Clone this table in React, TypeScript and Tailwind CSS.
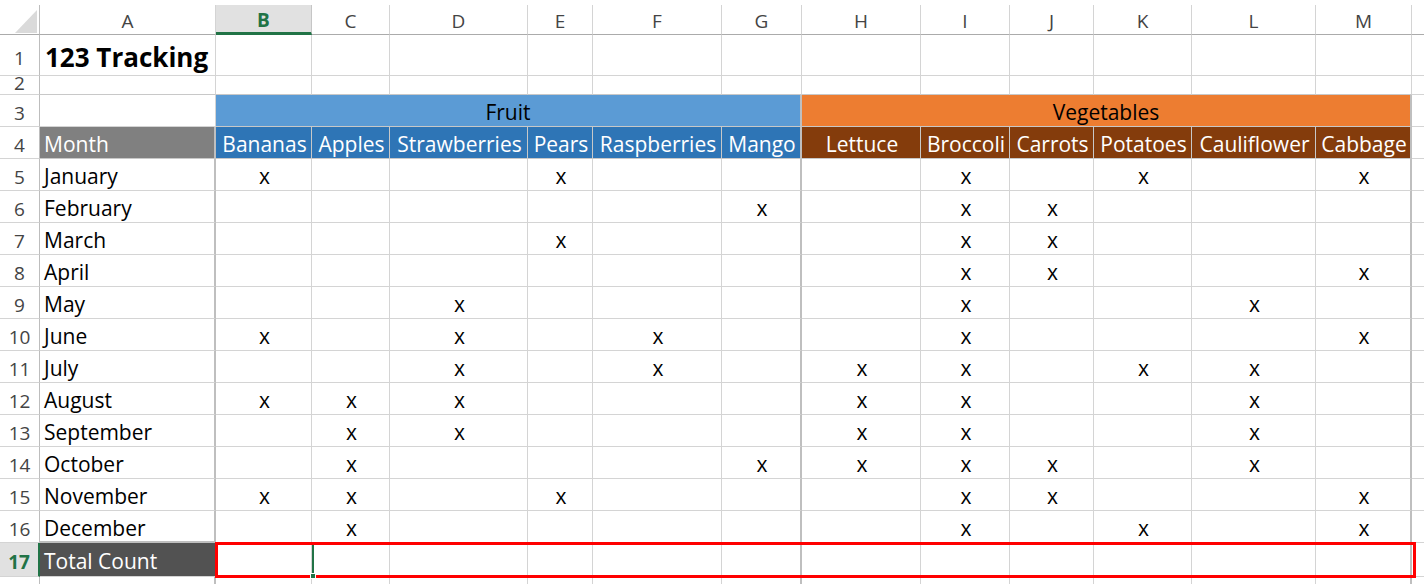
import React from 'react';

const COLS = ['A', 'B', 'C', 'D', 'E', 'F', 'G', 'H', 'I', 'J', 'K', 'L', 'M'];
const FRUIT = ['Bananas', 'Apples', 'Strawberries', 'Pears', 'Raspberries', 'Mango'];
const VEG = ['Lettuce', 'Broccoli', 'Carrots', 'Potatoes', 'Cauliflower', 'Cabbage'];

// month name, then the columns that carry an x
const MONTHS: Array<[string, string]> = [
  ['January', 'BEIKM'],
  ['February', 'GIJ'],
  ['March', 'EIJ'],
  ['April', 'IJM'],
  ['May', 'DIL'],
  ['June', 'BDFIM'],
  ['July', 'DFHIKL'],
  ['August', 'BCDHIL'],
  ['September', 'CDHIL'],
  ['October', 'CGHIJL'],
  ['November', 'BCEIJM'],
  ['December', 'CIKM'],
];

const thinR = 'border-r border-r-[#d4d4d4]';
const thickR = 'border-r-2 border-r-[#bfbfbf]';
const rightFor = (c: string) => (c === 'A' || c === 'G' || c === 'M' ? thickR : thinR);

const RowNum: React.FC<{ n?: number; clip?: boolean }> = ({ n, clip }) => (
  <div
    className={`flex justify-center overflow-hidden border-r border-b border-r-[#bdbdbd] border-b-[#d4d4d4] bg-white text-[19px] text-[#444] ${
      clip ? 'items-end pb-[1px] leading-[19px]' : 'items-center pt-[6px]'
    }`}
  >
    {n}
  </div>
);

const App: React.FC = () => {
  return (
    <div className="relative h-[584px] w-[1424px] overflow-hidden bg-white font-['Open_Sans',sans-serif] text-[21px] text-black">
      <div className="grid grid-cols-[40px_176px_96px_78px_138px_65px_129px_80px_119px_89px_84px_98px_124px_96px_1fr] grid-rows-[35px_41px_19px_32px_32px_repeat(12,32px)_34px_32px]">
        {/* column letters */}
        <div className="flex pt-[5px]">
          <div className="flex flex-1 items-end justify-end border-r border-b border-r-[#bdbdbd] border-b-[#ababab] pr-[2px] pb-[1px]">
            <svg width="22" height="23" viewBox="0 0 22 23">
              <polygon points="22,0 22,23 0,23" fill="#dadada" />
            </svg>
          </div>
        </div>
        {COLS.map((c) => (
          <div key={c} className="flex pt-[5px]">
            {c === 'B' ? (
              <div className="flex flex-1 items-center justify-center border-r border-b-[3px] border-r-[#c6c6c6] border-b-[#217346] bg-[#e1e1e1] pt-[3px] text-[19px] font-bold text-[#217346]">
                {c}
              </div>
            ) : (
              <div className="flex flex-1 items-center justify-center border-r border-b border-r-[#d4d4d4] border-b-[#ababab] pt-[4px] text-[19px] text-[#444]">
                {c}
              </div>
            )}
          </div>
        ))}
        <div className="flex pt-[5px]">
          <div className="flex-1 border-b border-b-[#ababab]" />
        </div>

        {/* row 1 */}
        <RowNum n={1} />
        <div className={`flex items-center whitespace-nowrap border-b border-b-[#d4d4d4] pl-[5px] pt-[4px] text-[26px] font-bold ${thinR}`}>
          123 Tracking
        </div>
        {COLS.slice(1).map((c) => (
          <div key={c} className={`border-b border-b-[#d4d4d4] ${thinR}`} />
        ))}
        <div className="border-b border-b-[#d4d4d4]" />

        {/* row 2 */}
        <RowNum n={2} clip />
        {COLS.map((c) => (
          <div key={c} className={`border-b border-b-[#c8c8c8] ${thinR}`} />
        ))}
        <div className="border-b border-b-[#d4d4d4]" />

        {/* row 3 */}
        <RowNum n={3} />
        <div className={`border-b border-b-[#d4d4d4] ${thinR}`} />
        <div className="col-span-6 flex items-center justify-center border-r-2 border-b border-r-[#bfbfbf] border-b-[#c8c8c8] bg-[#5b9bd5] pt-[5px]">
          Fruit
        </div>
        <div className="col-span-6 flex items-center justify-center border-r-2 border-b border-r-[#bfbfbf] border-b-[#c8c8c8] bg-[#ed7d31] pt-[5px]">
          Vegetables
        </div>
        <div className="border-b border-b-[#d4d4d4]" />

        {/* row 4 */}
        <RowNum n={4} />
        <div className={`flex items-center border-b border-b-[#c8c8c8] bg-[#808080] pl-[4px] pt-[5px] text-white ${thickR}`}>
          Month
        </div>
        {FRUIT.map((f, i) => (
          <div
            key={f}
            className={`flex items-center justify-center whitespace-nowrap border-b border-b-[#c8c8c8] bg-[#2e75b6] pt-[5px] pl-[2px] text-white ${
              i === 5 ? thickR : 'border-r border-r-[#c8c8c8]'
            }`}
          >
            {f}
          </div>
        ))}
        {VEG.map((v, i) => (
          <div
            key={v}
            className={`flex items-center justify-center whitespace-nowrap border-b border-b-[#c8c8c8] bg-[#843c0c] pt-[5px] pl-[2px] text-white ${
              i === 5 ? thickR : 'border-r border-r-[#c8c8c8]'
            }`}
          >
            {v}
          </div>
        ))}
        <div className="border-b border-b-[#d4d4d4]" />

        {/* rows 5-16 */}
        {MONTHS.map(([m, marks], r) => (
          <React.Fragment key={m}>
            <RowNum n={r + 5} />
            <div
              className={`flex items-center pl-[4px] pt-[5px] ${thickR} ${
                r === 11 ? 'border-b-2 border-b-[#bfbfbf]' : 'border-b border-b-[#d4d4d4]'
              }`}
            >
              {m}
            </div>
            {COLS.slice(1).map((c) => (
              <div key={c} className={`flex items-center justify-center border-b border-b-[#d4d4d4] pt-[5px] pl-[2px] ${rightFor(c)}`}>
                {marks.includes(c) ? 'x' : ''}
              </div>
            ))}
            <div className="border-b border-b-[#d4d4d4]" />
          </React.Fragment>
        ))}

        {/* row 17 */}
        <div className="flex items-center justify-center border-r-2 border-b border-r-[#217346] border-b-[#d4d4d4] bg-[#e1e1e1] pt-[5px] text-[19px] font-bold text-[#217346]">
          17
        </div>
        <div className="flex items-center border-b border-b-[#d4d4d4] bg-[#525252] pl-[4px] pt-[5px] text-white">
          Total Count
        </div>
        {COLS.slice(1).map((c) => (
          <div key={c} className={`border-b border-b-[#d4d4d4] ${rightFor(c)}`} />
        ))}
        <div className="border-b border-b-[#d4d4d4]" />

        {/* row 18, only its top edge is in view */}
        <RowNum />
        {COLS.map((c) => (
          <div key={c} className={`border-b border-b-[#d4d4d4] ${rightFor(c)}`} />
        ))}
        <div className="border-b border-b-[#d4d4d4]" />
      </div>

      {/* selection on B17 and the red box over the total row */}
      <div className="absolute left-[215px] top-[542px] h-[36px] w-[99px] border-2 border-[#217346]" />
      <div className="absolute left-[215px] top-[542px] h-[36px] w-[1201px] border-[3px] border-[#ff0000]" />
      <div className="absolute left-[310px] top-[573px] h-[6px] w-[6px] border border-white bg-[#217346]" />
    </div>
  );
};

export default App;
